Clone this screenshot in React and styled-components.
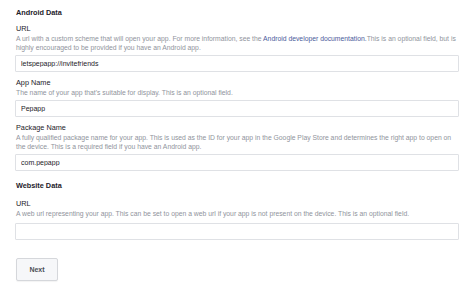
import React from "react";
import styled, { createGlobalStyle } from "styled-components";

const GlobalStyle = createGlobalStyle`
  html, body {
    margin: 0;
    padding: 0;
    background: #ffffff;
  }
  body {
    font-family: "Liberation Sans", Arial, sans-serif;
    -webkit-font-smoothing: antialiased;
  }
`;

const Page = styled.div`
  width: 474px;
  height: 288px;
  box-sizing: border-box;
  padding: 8px 15px 0 15px;
  display: flex;
  flex-direction: column;
`;

const SectionTitle = styled.h3`
  margin: ${(p) => p.top || 0}px 0 ${(p) => p.gap || 6}px 1px;
  font-size: 7.3px;
  line-height: 10px;
  font-weight: bold;
  color: #1d2129;
`;

const Field = styled.div`
  display: flex;
  flex-direction: column;
  margin-bottom: 6px;
`;

const Label = styled.label`
  margin-left: 1px;
  font-size: 7.3px;
  line-height: 10px;
  color: #1d2129;
`;

const Help = styled.p`
  margin: 0 0 0 1px;
  font-size: 6.8px;
  line-height: 9px;
  color: #90949c;
  white-space: nowrap;
`;

const DocLink = styled.a`
  color: #4b5b9b;
  text-decoration: none;
`;

const Input = styled.input`
  box-sizing: border-box;
  width: 444px;
  height: 17px;
  margin-top: ${(p) => p.top || 3}px;
  padding: 0 5px;
  border: 1px solid #dfe1e5;
  border-radius: 1px;
  background: #ffffff;
  font-family: "Liberation Sans", Arial, sans-serif;
  font-size: 7px;
  color: #1d2129;
  outline: none;
`;

const Footer = styled.div`
  margin-top: 12px;
  display: flex;
`;

const Button = styled.button`
  box-sizing: border-box;
  width: 42px;
  height: 23px;
  margin-left: 1px;
  border: 1px solid #d5d7db;
  border-radius: 2px;
  background: #f6f7f9;
  box-shadow: 0 1px 1px rgba(0, 0, 0, 0.05);
  font-family: "Liberation Sans", Arial, sans-serif;
  font-size: 7px;
  font-weight: bold;
  color: #4b4f56;
  padding: 0;
`;

export default function App() {
  return (
    <>
      <GlobalStyle />
      <Page>
        <SectionTitle>Android Data</SectionTitle>
        <Field>
          <Label>URL</Label>
          <Help>
            A url with a custom scheme that will open your app. For more
            information, see the{" "}
            <DocLink href="#">Android developer documentation.</DocLink>This is
            an optional field, but is
            <br />
            highly encouraged to be provided if you have an Android app.
          </Help>
          <Input defaultValue="letspepapp://invitefriends" />
        </Field>
        <Field>
          <Label>App Name</Label>
          <Help>
            The name of your app that's suitable for display. This is an
            optional field.
          </Help>
          <Input defaultValue="Pepapp" />
        </Field>
        <Field>
          <Label>Package Name</Label>
          <Help>
            A fully qualified package name for your app. This is used as the ID
            for your app in the Google Play Store and determines the right app
            to open on
            <br />
            the device. This is a required field if you have an Android app.
          </Help>
          <Input defaultValue="com.pepapp" />
        </Field>
        <SectionTitle top={4} gap={8}>Website Data</SectionTitle>
        <Field>
          <Label>URL</Label>
          <Help>
            A web url representing your app. This can be set to open a web url
            if your app is not present on the device. This is an optional field.
          </Help>
          <Input defaultValue="" top={5} />
        </Field>
        <Footer>
          <Button>Next</Button>
        </Footer>
      </Page>
    </>
  );
}
